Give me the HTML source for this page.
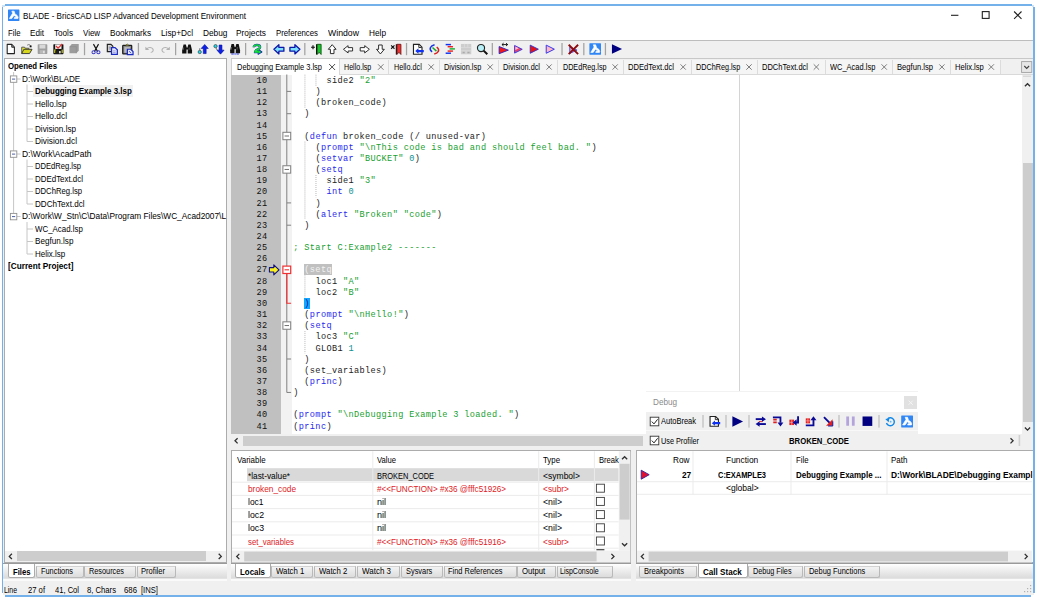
<!DOCTYPE html><html><head><meta charset="utf-8"><title>BLADE</title><style>
html,body{margin:0;padding:0;background:#fff;}
body{width:1040px;height:600px;position:relative;overflow:hidden;font-family:"Liberation Sans",sans-serif;}
#win{position:absolute;left:2.6px;top:5px;width:1031px;height:590.4px;background:#f0f0f0;overflow:hidden;}
#app{position:absolute;left:0;top:0;width:1040px;height:600px;}
.abs,.t,.c,#app div,#app svg,#app i{position:absolute;}
.t{white-space:pre;line-height:12px;color:#000;font-family:"Liberation Sans",sans-serif;transform-origin:0 50%;}
.c{white-space:pre;font:8.6px "Liberation Mono",monospace;line-height:11.15px;height:11.15px;color:#242424;letter-spacing:0.359px;}
.c.ln{color:#111;}
.c.k{color:#2828f0;}
.c.s{color:#18a030;}
.c.n{color:#109090;}
.c.cm{color:#18a030;}
.c.h{color:#f2f2f2;}
.c.hb{color:#0010a0;}
.pan{background:#fff;border:1px solid #acacac;box-sizing:border-box;}
.sep{width:1.3px;background:#a6a6a6;}
.thumb{background:#cdcdcd;}
.hl{height:1px;background:#e4e4e4;}
.vl{width:1px;background:#e4e4e4;}
.tb{box-sizing:border-box;border:1px solid #b9b9b9;border-top:1px solid #d2d2d2;border-radius:0 0 2.5px 2.5px;background:linear-gradient(#f3f3f3,#dcdcdc);}
.tb.a{background:#fff;border-color:#ababab;border-top:none;}
.ck{box-sizing:border-box;border:1px solid #404040;background:#fff;}
</style></head><body>
<div id="win"></div><div id="app">
<div style="left:3.3px;top:5.3px;width:1029.90px;height:34.70px;background:#fff"></div>
<div style="left:3.3px;top:40px;width:1029.90px;height:1.20px;background:#bdbdbd"></div>
<svg style="left:0;top:0" width="1040" height="30" viewBox="0 0 1040 30"><g transform="translate(8 9.5) scale(0.7125)"><rect x="0" y="0" width="16" height="16" rx="0.6" fill="#3186f6"/><path d="M5.4 2.3h3.2l1.5 4.6c2.2.2 3.600000000000001 2 4.2 4.4l-.4 1.4H8.700000000000001l.6-1.7h2.2c-.4-1.2-1.2-1.9-2.300000000000001-1.9L8.6 8 5.2 12.7H1.9l4.6-7.4z" fill="#fff" stroke="#fff" stroke-width="0.9" stroke-linejoin="round"/></g></svg>
<svg style="left:0;top:0" width="1040" height="60" viewBox="0 0 1040 60"><path d="M951 15.3h7.4" stroke="#222" stroke-width="1.1" fill="none"/><rect x="982.3" y="11.6" width="6.8" height="6.8" stroke="#222" stroke-width="1.1" fill="none"/><path d="M1014.1 11.5l7.4 7.4M1021.5 11.5l-7.4 7.4" stroke="#222" stroke-width="1.1" fill="none"/></svg>
<svg style="left:0;top:40px" width="1040" height="20" viewBox="0 40 1040 20"><g transform="translate(6.0 43.6) scale(0.6 0.675)"><path d="M2 1.2h7.6l4.4 4.2v9.4h-12z" fill="#fff" stroke="#222" stroke-width="1.8" stroke-linejoin="round"/><path d="M9.6 1.6v3.8h4" fill="#999" stroke="#222" stroke-width="1.4" stroke-linejoin="round"/></g><g transform="translate(21 43.6) scale(0.7125 0.7125)"><path d="M1 14V5h4l1 1.500000000000001h5V8" fill="#e6e63c" stroke="#444" stroke-width="1.2"/><path d="M1 14l3-6h11.5l-3.5 6z" fill="#d6d61e" stroke="#333" stroke-width="1.3" stroke-linejoin="round"/><path d="M8.5 2.5c1.5-1.5 3.5-1.5 5 .3" fill="none" stroke="#555" stroke-width="1"/><rect x="12.2" y="2.6" width="2.6" height="2.6" fill="#111"/></g><g transform="translate(37 43.6) scale(0.6875 0.6875)"><rect x="1" y="1" width="14" height="14" rx="1" fill="#9e9e9e"/><rect x="3.6" y="1.6" width="8.6" height="5.6" fill="#d8d8d8"/><rect x="4" y="9.6" width="8" height="5" fill="#b8b8b8"/><rect x="9" y="10.5" width="2" height="3.4" fill="#e8e8e8"/></g><g transform="translate(52.8 43.6) scale(0.7 0.7)"><rect x="0.8" y="0.8" width="14.4" height="14.4" rx="1" fill="#111"/><rect x="3.4" y="1.2" width="9" height="6.4" fill="#f4f4f4"/><path d="M4.5 3.5l3 3 6-6" stroke="#e03030" stroke-width="1.8" fill="none"/><rect x="2" y="8.4" width="2.2" height="5" fill="#d8d820"/><rect x="3.6" y="9.6" width="8.8" height="5.2" fill="#202020"/><rect x="9" y="10.6" width="2.2" height="3.2" fill="#eee"/><rect x="12.6" y="8.5" width="1.6" height="5" fill="#d8d820"/></g><g transform="translate(68.6 43.0) scale(0.7 0.7)"><path d="M4.5 1.500000000000001h10v9.5l-3.5 3.8h-9.8V5.2z" fill="#9c9c9c"/><path d="M1.500000000000001 5.2h9.5v9.5" fill="none" stroke="#8a8a8a" stroke-width="0.8"/></g><rect x="83.9" y="43" width="1.25" height="12.2" fill="#a2a2a2"/><g transform="translate(91.4 43.6) scale(0.575 0.6875)"><path d="M3.6 0.6l7.2 11M12.4 0.6l-7.2 11" stroke="#111" stroke-width="2" fill="none"/><ellipse cx="3.8" cy="12.6" rx="2.8" ry="2.2" fill="none" stroke="#3a3ac8" stroke-width="1.7"/><ellipse cx="12.2" cy="12.6" rx="2.8" ry="2.2" fill="none" stroke="#3a3ac8" stroke-width="1.7"/></g><g transform="translate(106.6 43.6) scale(0.725 0.725)"><path d="M1 1h5l2.6 2.6v7.4h-7.6z" fill="#d4d4d4" stroke="#222" stroke-width="1.6"/><path d="M3 5h3M3 7.4h3" stroke="#666" stroke-width="0.9"/><path d="M6.8 5.4h4.8l3.2 3.2v6.4h-8z" fill="#e6e8ff" stroke="#1c2cc0" stroke-width="1.7"/><path d="M8.6 10h4M8.6 12.2h4" stroke="#8088c8" stroke-width="0.9"/></g><g transform="translate(122 43.6) scale(0.725 0.725)"><rect x="1" y="2.4" width="12.4" height="11.8" rx="0.8" fill="#8a8a8a" stroke="#1c1c1c" stroke-width="1.7"/><rect x="3.2" y="4.6" width="8" height="8" fill="#b8b8b8"/><path d="M4.6 2.8L7.2 0.6l2.6 2.2z" fill="#e0d840" stroke="#222" stroke-width="0.8"/><path d="M7.4 7.8h4.6l3.2 3v4.4h-7.8z" fill="#e6e8ff" stroke="#1c2cc0" stroke-width="1.7"/><path d="M9.6 10.4l3.2 3" stroke="#1c2cc0" stroke-width="1"/></g><rect x="137.8" y="43" width="1.25" height="12.2" fill="#a2a2a2"/><g transform="translate(144.6 45.2) scale(0.6375 0.5125)"><path d="M3 7.5c3-4 8-4 10 0 1.500000000000001 3-.5 6-3.5 6.5" fill="none" stroke="#b0b0b0" stroke-width="1.7"/><path d="M1.2 3.2v6.2h6.2z" fill="#b0b0b0"/></g><g transform="translate(160.4 45.2) scale(0.6375 0.5125)"><path d="M13 7.5c-3-4-8-4-10 0-1.500000000000001 3 .5 6 3.5 6.5" fill="none" stroke="#b0b0b0" stroke-width="1.7"/><path d="M14.8 3.2v6.2h-6.2z" fill="#b0b0b0"/></g><rect x="175.0" y="43" width="1.25" height="12.2" fill="#a2a2a2"/><g transform="translate(181.6 43.6) scale(0.6875 0.6875)"><path d="M2.8 1.2h3.4l.9 3.4v9.9H0.8v-4.3z" fill="#111"/><path d="M13.2 1.2H9.8l-.9 3.4v9.9h6.3v-4.3z" fill="#111"/><rect x="6.4" y="5.6" width="3.2" height="3" fill="#111"/><path d="M3 5.5l-.8 4" stroke="#888" stroke-width="0.8"/><path d="M11.2 5.5l-.4 4" stroke="#888" stroke-width="0.8"/></g><g transform="translate(197.6 43.6) scale(0.7125 0.7125)"><path d="M10 1.2l5 5.600000000000001h-3v7.2h-4v-7.2h-3z" fill="#0c20e8" stroke="#000c90" stroke-width="0.8"/><circle cx="3" cy="11.8" r="2.3" fill="#20d8e8" stroke="#333" stroke-width="0.9"/><path d="M3 9V6.5" stroke="#333" stroke-width="0.9"/></g><g transform="translate(213.4 43.6) scale(0.7125 0.7125)"><path d="M10 14.8l5-5.600000000000001h-3v-7.2h-4v7.2h-3z" fill="#0c20e8" stroke="#000c90" stroke-width="0.8"/><circle cx="3" cy="3.6" r="2.3" fill="#20d8e8" stroke="#333" stroke-width="0.9"/><path d="M3.6 6l1.500000000000001 3" stroke="#333" stroke-width="0.9"/></g><g transform="translate(229.6 43.2) scale(0.6875 0.6875)"><path d="M2.8 1.2h3.4l.9 3.4v9.9H0.8v-4.3z" fill="#111"/><path d="M13.2 1.2H9.8l-.9 3.4v9.9h6.3v-4.3z" fill="#111"/><rect x="6.4" y="5.6" width="3.2" height="3" fill="#111"/><path d="M3 5.5l-.8 4" stroke="#888" stroke-width="0.8"/><path d="M11.2 5.5l-.4 4" stroke="#888" stroke-width="0.8"/><path d="M2.500000000000001 15.6h3.5M7 15.6h2M10 15.6h3.5" stroke="#2030e0" stroke-width="1.600000000000001"/></g><rect x="245.0" y="43" width="1.25" height="12.2" fill="#a2a2a2"/><g transform="translate(251.8 43.6) scale(0.6625 0.6625)"><path d="M3 5.5C3 1 12.5 1 12.5 5.5C12.5 9 5 8.5 5 12.6H10.5" fill="none" stroke="#2430c0" stroke-width="3.7"/><path d="M9.6 8.6l5.600000000000001 4-5.600000000000001 3.6z" fill="#1830b0" stroke="#1830b0" stroke-width="1.600000000000001" stroke-linejoin="round"/><path d="M3 5.5C3 1 12.5 1 12.5 5.5C12.5 9 5 8.5 5 12.6H10.5" fill="none" stroke="#10e030" stroke-width="2.5"/><path d="M10 9.6l4.2 3-4.2 2.8z" fill="#10e030"/></g><rect x="266.4" y="43" width="1.25" height="12.2" fill="#a2a2a2"/><g transform="translate(273.2 43.6) scale(0.7125 0.7125)"><path d="M1 8l7-6.5v3.8h7v5.4h-7v3.8z" fill="#7ce0ff" stroke="#0c16a8" stroke-width="1.8" stroke-linejoin="round"/></g><g transform="translate(289.2 43.6) scale(0.7125 0.7125)"><path d="M15 8l-7-6.5v3.8h-7v5.4h7v3.8z" fill="#7ce0ff" stroke="#0c16a8" stroke-width="1.8" stroke-linejoin="round"/></g><rect x="304.2" y="43" width="1.25" height="12.2" fill="#a2a2a2"/><g transform="translate(310.6 43.6) scale(0.725 0.725)"><path d="M9 1h5.5v14l-2.7-3-2.8 3z" fill="#18c82c" stroke="#0a500a" stroke-width="1.2"/><path d="M0.6 5h5.4M3.3 2.300000000000001v5.4" stroke="#111" stroke-width="1.6"/><path d="M8.2 1v14" stroke="#111" stroke-width="1.5"/></g><g transform="translate(327.4 44.0) scale(0.6 0.6625)"><path d="M8 1l6.5 7h-3.5v6.5h-6v-6.5h-3.5z" fill="#fff" stroke="#222" stroke-width="1.5" stroke-linejoin="round"/></g><g transform="translate(342.8 44.800000000000004) scale(0.6625 0.5625)"><path d="M1 8l7-6.5v3.5h6.8v6h-6.8v3.5z" fill="#fff" stroke="#222" stroke-width="1.5" stroke-linejoin="round"/></g><g transform="translate(359.4 44.800000000000004) scale(0.6625 0.5625)"><path d="M15 8l-7-6.5v3.5h-6.8v6h6.8v3.5z" fill="#fff" stroke="#222" stroke-width="1.5" stroke-linejoin="round"/></g><g transform="translate(375.6 44.0) scale(0.6 0.6625)"><path d="M8 15l6.5-7h-3.5v-6.5h-6v6.5h-3.5z" fill="#fff" stroke="#222" stroke-width="1.5" stroke-linejoin="round"/></g><g transform="translate(390.4 43.6) scale(0.725 0.725)"><path d="M9 1h5.5v14l-2.7-3-2.8 3z" fill="#f03030" stroke="#701010" stroke-width="1.2"/><path d="M1 2.500000000000001l4.6 4.600000000000001M5.6 2.500000000000001l-4.6 4.600000000000001" stroke="#111" stroke-width="1.500000000000001"/><path d="M8.2 1v14" stroke="#111" stroke-width="1.5"/></g><rect x="405.9" y="43" width="1.25" height="12.2" fill="#a2a2a2"/><g transform="translate(412.4 43.6) scale(0.7125 0.7125)"><path d="M1.500000000000001 1h8l4 4v10h-12z" fill="#fff" stroke="#222" stroke-width="1.6"/><path d="M9 1.500000000000001v4h4" fill="none" stroke="#222" stroke-width="1.3"/><path d="M4 10.5l4.5-3.8v2.300000000000001h7.5v3h-7.5v2.300000000000001z" fill="#1030f0"/></g><g transform="translate(428.6 43.6) scale(0.725 0.725)"><path d="M8.2 1.6C3 3 -.5 7 4.800000000000001 11.4" fill="none" stroke="#1834e0" stroke-width="2"/><path d="M5.4 5.4l5.4 5" stroke="#18a830" stroke-width="2"/><path d="M7.8 14.4C13 13 16.5 9 11.2 4.6" fill="none" stroke="#d82020" stroke-width="2"/></g><g transform="translate(445 43.6) scale(0.6625 0.6625)"><path d="M1 1.500000000000001h8" stroke="#1030f0" stroke-width="2.2"/><path d="M4 4.7h8" stroke="#f02020" stroke-width="2.2"/><path d="M7 8h8" stroke="#18b030" stroke-width="2.2"/><path d="M4 11.3h8" stroke="#f02020" stroke-width="2.2"/><path d="M1 14.5h8" stroke="#1030f0" stroke-width="2.2"/></g><g transform="translate(460.6 43.6) scale(0.6875 0.6875)"><rect x="0.5" y="0.5" width="15" height="15" fill="#cdcdcd"/><path d="M0.5 5.5h15M0.5 10.5h15M5.5 0.5v5M10.5 0.5v5M8 10.5v5" stroke="#dedede" stroke-width="1.1"/><rect x="3" y="12" width="3" height="2" fill="#aaa"/><rect x="10" y="12" width="3" height="2" fill="#aaa"/></g><g transform="translate(476.6 43.6) scale(0.7125 0.7125)"><path d="M9.5 9.5l5.5 5.5" stroke="#111" stroke-width="2.8"/><circle cx="6.2" cy="6.2" r="5" fill="#b8f0f8" stroke="#222" stroke-width="1.6"/></g><rect x="491.7" y="43" width="1.25" height="12.2" fill="#a2a2a2"/><g transform="translate(498.4 43.0) scale(0.7125 0.7125)"><path d="M1 5l13 5-13 5z" fill="#f01818" stroke="#2020c0" stroke-width="1.2" stroke-linejoin="round"/><path d="M5 2.2h8M5 2.2l2.300000000000001-2M5 2.2l2.300000000000001 2M13 2.2l-2.300000000000001-2M13 2.2l-2.300000000000001 2" stroke="#111" stroke-width="1.3" fill="none"/></g><g transform="translate(514 44.6) scale(0.5875 0.5875)"><path d="M1 1.500000000000001l13 6.5-13 6.5z" fill="#f04060" stroke="#3030e0" stroke-width="1.5" stroke-linejoin="round"/><path d="M2.2 3.2l6 3-6 3z" fill="#ffc0d0"/></g><g transform="translate(529.6 44.2) scale(0.625 0.625)"><path d="M1 1.500000000000001l13 6.5-13 6.5z" fill="#e81010" stroke="#2828c8" stroke-width="1.4" stroke-linejoin="round"/></g><g transform="translate(545.6 44.2) scale(0.625 0.625)"><path d="M1 1.500000000000001l13 6.5-13 6.5z" fill="#ffb8c0" stroke="#3838f0" stroke-width="1.6" stroke-linejoin="round"/></g><rect x="561.4" y="43" width="1.25" height="12.2" fill="#a2a2a2"/><g transform="translate(567.6 43.6) scale(0.725 0.725)"><path d="M3 4.5l10 4.5-10 4.5z" fill="#f0a0b8" stroke="#4848e0" stroke-width="1.3" stroke-linejoin="round"/><path d="M1.5 1.6l13 13M14.5 1.6l-13 13" stroke="#8a0c10" stroke-width="2.5"/></g><rect x="583.1999999999999" y="43" width="1.25" height="12.2" fill="#a2a2a2"/><g transform="translate(589.4 43.2) scale(0.725)"><rect x="0" y="0" width="16" height="16" rx="0.6" fill="#3186f6"/><path d="M5.4 2.3h3.2l1.5 4.6c2.2.2 3.600000000000001 2 4.2 4.4l-.4 1.4H8.700000000000001l.6-1.7h2.2c-.4-1.2-1.2-1.9-2.300000000000001-1.9L8.6 8 5.2 12.7H1.9l4.6-7.4z" fill="#fff" stroke="#fff" stroke-width="0.9" stroke-linejoin="round"/></g><rect x="604.8" y="43" width="1.25" height="12.2" fill="#a2a2a2"/><g transform="translate(611.6 43.6) scale(0.675 0.675)"><path d="M0.5 0.8l15 7.2-15 7.2z" fill="#000080"/></g></svg>
<div class="pan" style="left:4.2px;top:58px;width:223.10px;height:505.40px;"></div>
<div style="left:33px;top:85px;width:100.30px;height:12.30px;background:#f1f1f1"></div>
<svg style="left:0;top:58px" width="230" height="300" viewBox="0 58 230 300"><path d="M13.6 72.0V216.0" stroke="#c6c6c6" stroke-width="1" fill="none"/><path d="M17 79.0h3.5" stroke="#c6c6c6" stroke-width="1" fill="none"/><path d="M27 84.5V141.5" stroke="#c6c6c6" stroke-width="1" fill="none"/><path d="M27 91.5h6" stroke="#c6c6c6" stroke-width="1" fill="none"/><path d="M27 104.0h6" stroke="#c6c6c6" stroke-width="1" fill="none"/><path d="M27 116.5h6" stroke="#c6c6c6" stroke-width="1" fill="none"/><path d="M27 129.0h6" stroke="#c6c6c6" stroke-width="1" fill="none"/><path d="M27 141.5h6" stroke="#c6c6c6" stroke-width="1" fill="none"/><rect x="10.4" y="75.9" width="6.4" height="6.4" fill="#fff" stroke="#919191" stroke-width="0.9"/><path d="M12 79.1h3.2" stroke="#4a5ea0" stroke-width="1"/><path d="M17 154.0h3.5" stroke="#c6c6c6" stroke-width="1" fill="none"/><path d="M27 159.5V204.0" stroke="#c6c6c6" stroke-width="1" fill="none"/><path d="M27 166.5h6" stroke="#c6c6c6" stroke-width="1" fill="none"/><path d="M27 179.0h6" stroke="#c6c6c6" stroke-width="1" fill="none"/><path d="M27 191.5h6" stroke="#c6c6c6" stroke-width="1" fill="none"/><path d="M27 204.0h6" stroke="#c6c6c6" stroke-width="1" fill="none"/><rect x="10.4" y="150.9" width="6.4" height="6.4" fill="#fff" stroke="#919191" stroke-width="0.9"/><path d="M12 154.1h3.2" stroke="#4a5ea0" stroke-width="1"/><path d="M17 216.5h3.5" stroke="#c6c6c6" stroke-width="1" fill="none"/><path d="M27 222.0V254.0" stroke="#c6c6c6" stroke-width="1" fill="none"/><path d="M27 229.0h6" stroke="#c6c6c6" stroke-width="1" fill="none"/><path d="M27 241.5h6" stroke="#c6c6c6" stroke-width="1" fill="none"/><path d="M27 254.0h6" stroke="#c6c6c6" stroke-width="1" fill="none"/><rect x="10.4" y="213.4" width="6.4" height="6.4" fill="#fff" stroke="#919191" stroke-width="0.9"/><path d="M12 216.6h3.2" stroke="#4a5ea0" stroke-width="1"/></svg>
<div style="left:5.2px;top:550.6px;width:221.10px;height:11.80px;background:#f0f0f0"></div>
<div class="thumb" style="left:17px;top:551.4px;width:189.00px;height:10.00px;"></div>
<div style="left:231px;top:58px;width:801.60px;height:16.40px;background:#f0f0f0"></div>
<div style="left:231px;top:57.6px;width:801.60px;height:1.00px;background:#c8c8c8"></div>
<div style="left:340px;top:59.5px;width:660.50px;height:14.10px;background:#f5f5f5"></div>
<div style="left:231.4px;top:58.6px;width:108.60px;height:16.00px;background:#fff;border-left:1px solid #d0d0d0;border-right:1px solid #d8d8d8;box-sizing:border-box"></div>
<div style="left:388.25px;top:60px;width:1.10px;height:13.50px;background:#dcdcdc"></div>
<div style="left:438.5px;top:60px;width:1.10px;height:13.50px;background:#dcdcdc"></div>
<div style="left:498.25px;top:60px;width:1.10px;height:13.50px;background:#dcdcdc"></div>
<div style="left:557.0px;top:60px;width:1.10px;height:13.50px;background:#dcdcdc"></div>
<div style="left:622.5px;top:60px;width:1.10px;height:13.50px;background:#dcdcdc"></div>
<div style="left:690.5px;top:60px;width:1.10px;height:13.50px;background:#dcdcdc"></div>
<div style="left:756.5px;top:60px;width:1.10px;height:13.50px;background:#dcdcdc"></div>
<div style="left:825.3px;top:60px;width:1.10px;height:13.50px;background:#dcdcdc"></div>
<div style="left:891.8px;top:60px;width:1.10px;height:13.50px;background:#dcdcdc"></div>
<div style="left:950.0px;top:60px;width:1.10px;height:13.50px;background:#dcdcdc"></div>
<div style="left:1000.0px;top:60px;width:1.10px;height:13.50px;background:#dcdcdc"></div>
<div style="left:340px;top:73.6px;width:692.60px;height:0.90px;background:#d9d9d9"></div>
<svg style="left:0;top:50px" width="1040" height="40" viewBox="0 50 1040 40"><path d="M329.1 64.0L335.1 70.0M335.1 64.0L329.1 70.0" stroke="#444" stroke-width="0.95" fill="none"/><path d="M378.0 64.25L383.5 69.75M383.5 64.25L378.0 69.75" stroke="#777" stroke-width="0.95" fill="none"/><path d="M428.5 64.35L433.8 69.65M433.8 64.35L428.5 69.65" stroke="#777" stroke-width="0.95" fill="none"/><path d="M487.5 64.35L492.8 69.65M492.8 64.35L487.5 69.65" stroke="#777" stroke-width="0.95" fill="none"/><path d="M546.5 64.39999999999998L551.7 69.60000000000002M551.7 64.39999999999998L546.5 69.60000000000002" stroke="#777" stroke-width="0.95" fill="none"/><path d="M612.5 64.35000000000002L617.8 69.64999999999998M617.8 64.35000000000002L612.5 69.64999999999998" stroke="#777" stroke-width="0.95" fill="none"/><path d="M680.5 64.35000000000002L685.8 69.64999999999998M685.8 64.35000000000002L680.5 69.64999999999998" stroke="#777" stroke-width="0.95" fill="none"/><path d="M746.3 64.29999999999995L751.7 69.70000000000005M751.7 64.29999999999995L746.3 69.70000000000005" stroke="#777" stroke-width="0.95" fill="none"/><path d="M813.7 64.30000000000001L819.1 69.69999999999999M819.1 64.30000000000001L813.7 69.69999999999999" stroke="#777" stroke-width="0.95" fill="none"/><path d="M881.5 64.30000000000001L886.9 69.69999999999999M886.9 64.30000000000001L881.5 69.69999999999999" stroke="#777" stroke-width="0.95" fill="none"/><path d="M939.3 64.39999999999998L944.5 69.60000000000002M944.5 64.39999999999998L939.3 69.60000000000002" stroke="#777" stroke-width="0.95" fill="none"/><path d="M988.5 64.25L994.0 69.75M994.0 64.25L988.5 69.75" stroke="#777" stroke-width="0.95" fill="none"/><rect x="1021.6" y="61.6" width="10.2" height="10.8" fill="#e6e6e6" stroke="#a0a0a0" stroke-width="0.9"/><polyline points="1024.30,66.00 1026.70,68.40 1029.10,66.00" fill="none" stroke="#404040" stroke-width="1.1"/></svg>
<div style="left:231px;top:74.5px;width:791.30px;height:359.50px;background:#fff"></div>
<div style="left:231px;top:74.5px;width:50.00px;height:359.50px;background:#c0c0c0"></div>
<div style="left:281px;top:74.5px;width:11.00px;height:359.50px;background:#f2f2f2"></div>
<div style="left:738.7px;top:74.5px;width:1.10px;height:359.50px;background:#d4d4d4"></div>
<div style="left:1022.3px;top:74.5px;width:10.30px;height:359.50px;background:#f0f0f0"></div>
<div class="thumb" style="left:1022.6px;top:163.3px;width:10.00px;height:258.70px;"></div>
<div style="left:231px;top:434px;width:801.60px;height:14.00px;background:#f0f0f0"></div>
<div class="thumb" style="left:242.5px;top:436px;width:400.50px;height:9.70px;"></div>
<svg style="left:225px;top:70px" width="815" height="385" viewBox="225 70 815 385"><path d="M286.8 74.5V392.45h4.3" stroke="#808080" stroke-width="1" fill="none"/><path d="M286.8 91.4h4.3" stroke="#808080" stroke-width="1" fill="none"/><path d="M286.8 113.7h4.3" stroke="#808080" stroke-width="1" fill="none"/><path d="M286.8 202.9h4.3" stroke="#808080" stroke-width="1" fill="none"/><path d="M286.8 225.20000000000002h4.3" stroke="#808080" stroke-width="1" fill="none"/><path d="M286.8 359.0h4.3" stroke="#808080" stroke-width="1" fill="none"/><path d="M286.8 269.8V303.25h4.3" stroke="#f03030" stroke-width="1.2" fill="none"/><rect x="282.90000000000003" y="132.3" width="7.8" height="7.4" fill="#fff" stroke="#808080" stroke-width="1"/><path d="M284.6 136.0h4.4" stroke="#707070" stroke-width="1"/><rect x="282.90000000000003" y="165.75" width="7.8" height="7.4" fill="#fff" stroke="#808080" stroke-width="1"/><path d="M284.6 169.45h4.4" stroke="#707070" stroke-width="1"/><rect x="282.90000000000003" y="321.85" width="7.8" height="7.4" fill="#fff" stroke="#808080" stroke-width="1"/><path d="M284.6 325.55h4.4" stroke="#707070" stroke-width="1"/><rect x="282.90000000000003" y="266.1" width="7.8" height="7.4" fill="#fff" stroke="#f03030" stroke-width="1.2"/><path d="M284.6 269.8h4.4" stroke="#f03030" stroke-width="1.1"/><path d="M269.4 267.6h4.4v-2.8l5.2 5-5.2 5v-2.8h-4.4z" fill="#f8f020" stroke="#101080" stroke-width="1.1" stroke-linejoin="round"/><path d="M304.94 74.67V108.12" stroke="#b8b8b8" stroke-width="1" stroke-dasharray="1 1" fill="none"/><path d="M315.98 74.67V85.83" stroke="#b8b8b8" stroke-width="1" stroke-dasharray="1 1" fill="none"/><path d="M304.94 141.58V219.62" stroke="#b8b8b8" stroke-width="1" stroke-dasharray="1 1" fill="none"/><path d="M315.98 175.03V197.32" stroke="#b8b8b8" stroke-width="1" stroke-dasharray="1 1" fill="none"/><path d="M304.94 275.38V297.68" stroke="#b8b8b8" stroke-width="1" stroke-dasharray="1 1" fill="none"/><path d="M304.94 331.12V353.43" stroke="#b8b8b8" stroke-width="1" stroke-dasharray="1 1" fill="none"/><polyline points="1024.90,86.30 1027.50,83.70 1030.10,86.30" fill="none" stroke="#303030" stroke-width="1.3"/><polyline points="1024.90,427.50 1027.50,430.10 1030.10,427.50" fill="none" stroke="#303030" stroke-width="1.3"/><polyline points="237.60,438.20 235.00,440.80 237.60,443.40" fill="none" stroke="#303030" stroke-width="1.3"/><polyline points="1010.50,438.20 1013.10,440.80 1010.50,443.40" fill="none" stroke="#303030" stroke-width="1.3"/><rect x="1018.6" y="435" width="1.6" height="11" fill="#d0d0d0"/><rect x="1023" y="75.6" width="8" height="1.4" fill="#d8d8d8"/></svg>
<div style="left:303.74px;top:264.125px;width:28.30px;height:10.85px;background:#c0c0c0"></div>
<div style="left:303.74px;top:297.675px;width:5.92px;height:10.95px;background:#12a6ff"></div>
<span class="c ln" style="left:256.56px;top:75.92px">10</span>
<span class="c" style="left:326.42px;top:75.92px">side2 </span>
<span class="c s" style="left:359.54px;top:75.92px">&quot;2&quot;</span>
<span class="c ln" style="left:256.56px;top:87.08px">11</span>
<span class="c" style="left:315.38px;top:87.08px">)</span>
<span class="c ln" style="left:256.56px;top:98.22px">12</span>
<span class="c" style="left:315.38px;top:98.22px">(broken_code)</span>
<span class="c ln" style="left:256.56px;top:109.38px">13</span>
<span class="c" style="left:304.34px;top:109.38px">)</span>
<span class="c ln" style="left:256.56px;top:120.52px">14</span>
<span class="c ln" style="left:256.56px;top:131.68px">15</span>
<span class="c" style="left:304.34px;top:131.68px">(</span>
<span class="c k" style="left:309.86px;top:131.68px">defun</span>
<span class="c" style="left:337.46px;top:131.68px"> broken_code (/ unused-var)</span>
<span class="c ln" style="left:256.56px;top:142.83px">16</span>
<span class="c" style="left:315.38px;top:142.83px">(</span>
<span class="c k" style="left:320.90px;top:142.83px">prompt</span>
<span class="c s" style="left:359.54px;top:142.83px">&quot;\nThis code is bad and should feel bad. &quot;</span>
<span class="c" style="left:591.38px;top:142.83px">)</span>
<span class="c ln" style="left:256.56px;top:153.98px">17</span>
<span class="c" style="left:315.38px;top:153.98px">(</span>
<span class="c k" style="left:320.90px;top:153.98px">setvar</span>
<span class="c s" style="left:359.54px;top:153.98px">&quot;BUCKET&quot;</span>
<span class="c n" style="left:409.22px;top:153.98px">0</span>
<span class="c" style="left:414.74px;top:153.98px">)</span>
<span class="c ln" style="left:256.56px;top:165.12px">18</span>
<span class="c" style="left:315.38px;top:165.12px">(</span>
<span class="c k" style="left:320.90px;top:165.12px">setq</span>
<span class="c ln" style="left:256.56px;top:176.28px">19</span>
<span class="c" style="left:326.42px;top:176.28px">side1 </span>
<span class="c s" style="left:359.54px;top:176.28px">&quot;3&quot;</span>
<span class="c ln" style="left:256.56px;top:187.43px">20</span>
<span class="c k" style="left:326.42px;top:187.43px">int</span>
<span class="c n" style="left:348.50px;top:187.43px">0</span>
<span class="c ln" style="left:256.56px;top:198.58px">21</span>
<span class="c" style="left:315.38px;top:198.58px">)</span>
<span class="c ln" style="left:256.56px;top:209.73px">22</span>
<span class="c" style="left:315.38px;top:209.73px">(</span>
<span class="c k" style="left:320.90px;top:209.73px">alert</span>
<span class="c s" style="left:354.02px;top:209.73px">&quot;Broken&quot; &quot;code&quot;</span>
<span class="c" style="left:436.82px;top:209.73px">)</span>
<span class="c ln" style="left:256.56px;top:220.88px">23</span>
<span class="c" style="left:304.34px;top:220.88px">)</span>
<span class="c ln" style="left:256.56px;top:232.03px">24</span>
<span class="c ln" style="left:256.56px;top:243.18px">25</span>
<span class="c cm" style="left:293.30px;top:243.18px">; Start C:Example2 -------</span>
<span class="c ln" style="left:256.56px;top:254.32px">26</span>
<span class="c ln" style="left:256.56px;top:265.48px">27</span>
<span class="c h" style="left:304.34px;top:265.48px">(setq</span>
<span class="c ln" style="left:256.56px;top:276.63px">28</span>
<span class="c" style="left:315.38px;top:276.63px">loc1 </span>
<span class="c s" style="left:342.98px;top:276.63px">&quot;A&quot;</span>
<span class="c ln" style="left:256.56px;top:287.78px">29</span>
<span class="c" style="left:315.38px;top:287.78px">loc2 </span>
<span class="c s" style="left:342.98px;top:287.78px">&quot;B&quot;</span>
<span class="c ln" style="left:256.56px;top:298.93px">30</span>
<span class="c hb" style="left:304.34px;top:298.93px">)</span>
<span class="c ln" style="left:256.56px;top:310.07px">31</span>
<span class="c" style="left:304.34px;top:310.07px">(</span>
<span class="c k" style="left:309.86px;top:310.07px">prompt</span>
<span class="c s" style="left:348.50px;top:310.07px">&quot;\nHello!&quot;</span>
<span class="c" style="left:403.70px;top:310.07px">)</span>
<span class="c ln" style="left:256.56px;top:321.23px">32</span>
<span class="c" style="left:304.34px;top:321.23px">(</span>
<span class="c k" style="left:309.86px;top:321.23px">setq</span>
<span class="c ln" style="left:256.56px;top:332.38px">33</span>
<span class="c" style="left:315.38px;top:332.38px">loc3 </span>
<span class="c s" style="left:342.98px;top:332.38px">&quot;C&quot;</span>
<span class="c ln" style="left:256.56px;top:343.53px">34</span>
<span class="c" style="left:315.38px;top:343.53px">GLOB1 </span>
<span class="c n" style="left:348.50px;top:343.53px">1</span>
<span class="c ln" style="left:256.56px;top:354.68px">35</span>
<span class="c" style="left:304.34px;top:354.68px">)</span>
<span class="c ln" style="left:256.56px;top:365.83px">36</span>
<span class="c" style="left:304.34px;top:365.83px">(set_variables)</span>
<span class="c ln" style="left:256.56px;top:376.98px">37</span>
<span class="c" style="left:304.34px;top:376.98px">(</span>
<span class="c k" style="left:309.86px;top:376.98px">princ</span>
<span class="c" style="left:337.46px;top:376.98px">)</span>
<span class="c ln" style="left:256.56px;top:388.12px">38</span>
<span class="c" style="left:293.30px;top:388.12px">)</span>
<span class="c ln" style="left:256.56px;top:399.28px">39</span>
<span class="c ln" style="left:256.56px;top:410.43px">40</span>
<span class="c" style="left:293.30px;top:410.43px">(</span>
<span class="c k" style="left:298.82px;top:410.43px">prompt</span>
<span class="c s" style="left:337.46px;top:410.43px">&quot;\nDebugging Example 3 loaded. &quot;</span>
<span class="c" style="left:514.10px;top:410.43px">)</span>
<span class="c ln" style="left:256.56px;top:421.58px">41</span>
<span class="c" style="left:293.30px;top:421.58px">(</span>
<span class="c k" style="left:298.82px;top:421.58px">princ</span>
<span class="c" style="left:326.42px;top:421.58px">)</span>
<div class="pan" style="left:231px;top:450.3px;width:400.30px;height:113.10px;"></div>
<svg style="left:225px;top:448px" width="410" height="118" viewBox="225 448 410 118"><rect x="247" y="468.2" width="371.6" height="13" fill="#d9d9d9"/><rect x="232" y="481.70" width="386.6" height="1" fill="#ebebeb"/><rect x="232" y="494.90" width="386.6" height="1" fill="#ebebeb"/><rect x="232" y="508.10" width="386.6" height="1" fill="#ebebeb"/><rect x="232" y="521.30" width="386.6" height="1" fill="#ebebeb"/><rect x="232" y="534.50" width="386.6" height="1" fill="#ebebeb"/><rect x="232" y="547.70" width="386.6" height="1" fill="#ebebeb"/><rect x="372.3" y="451.3" width="1" height="99" fill="#ebebeb"/><rect x="538.2" y="451.3" width="1" height="99" fill="#ebebeb"/><rect x="593.9" y="451.3" width="1" height="99" fill="#ebebeb"/><rect x="596.4" y="484.20" width="8" height="8" fill="#fff" stroke="#3c3c3c" stroke-width="0.9"/><rect x="596.4" y="497.40" width="8" height="8" fill="#fff" stroke="#3c3c3c" stroke-width="0.9"/><rect x="596.4" y="510.60" width="8" height="8" fill="#fff" stroke="#3c3c3c" stroke-width="0.9"/><rect x="596.4" y="523.80" width="8" height="8" fill="#fff" stroke="#3c3c3c" stroke-width="0.9"/><rect x="596.4" y="537.00" width="8" height="8" fill="#fff" stroke="#3c3c3c" stroke-width="0.9"/><rect x="596.4" y="549" width="8" height="1.500000000000001" fill="#555"/><rect x="618.8" y="451.3" width="11.5" height="99.3" fill="#f0f0f0"/><rect x="619.6" y="463.8" width="10" height="55.8" fill="#cdcdcd"/><polyline points="622.00,459.30 624.60,456.70 627.20,459.30" fill="none" stroke="#303030" stroke-width="1.3"/><polyline points="622.00,543.20 624.60,545.80 627.20,543.20" fill="none" stroke="#303030" stroke-width="1.3"/><rect x="232" y="550.6" width="398.3" height="11.8" fill="#f0f0f0"/><rect x="244.2" y="551.6" width="352.4" height="9.8" fill="#cdcdcd"/><polyline points="239.30,553.90 236.70,556.50 239.30,559.10" fill="none" stroke="#303030" stroke-width="1.3"/><polyline points="611.40,553.90 614.00,556.50 611.40,559.10" fill="none" stroke="#303030" stroke-width="1.3"/></svg><svg style="left:0;top:548px" width="230" height="16" viewBox="0 548 230 16"><polyline points="11.90,553.80 9.30,556.40 11.90,559.00" fill="none" stroke="#303030" stroke-width="1.3"/><polyline points="218.70,553.80 221.30,556.40 218.70,559.00" fill="none" stroke="#303030" stroke-width="1.3"/></svg>
<div class="pan" style="left:636px;top:450.3px;width:398.00px;height:113.10px;"></div>
<svg style="left:632px;top:448px" width="402" height="118" viewBox="632 448 402 118"><rect x="637" y="481.2" width="395" height="1" fill="#ebebeb"/><rect x="637" y="493.8" width="395" height="1" fill="#ebebeb"/><rect x="692.5" y="451.3" width="1" height="43" fill="#ebebeb"/><rect x="790.5" y="451.3" width="1" height="43" fill="#ebebeb"/><rect x="886.5" y="451.3" width="1" height="43" fill="#ebebeb"/><path d="M641.2 470.2l8 4.500000000000001-8 4.500000000000001z" fill="#e01030" stroke="#3020a0" stroke-width="0.9" stroke-linejoin="round"/><rect x="637" y="550.6" width="395" height="11.8" fill="#f0f0f0"/><rect x="648.6" y="551.6" width="359.4" height="9.8" fill="#cdcdcd"/><polyline points="643.90,553.90 641.30,556.50 643.90,559.10" fill="none" stroke="#303030" stroke-width="1.3"/><polyline points="1024.70,553.90 1027.30,556.50 1024.70,559.10" fill="none" stroke="#303030" stroke-width="1.3"/></svg>
<div style="left:3.3px;top:563.4px;width:1029.90px;height:1.00px;background:#9a9a9a"></div>
<div style="left:3.3px;top:564.4px;width:1029.90px;height:14.80px;background:linear-gradient(#ffffff,#f4f4f4 25%,#dcdcdc 92%,#e8e8e8)"></div>
<div style="left:3.3px;top:579.2px;width:1029.90px;height:1.40px;background:#fafafa"></div>
<div style="left:227.3px;top:563.4px;width:3.70px;height:17.20px;background:#f0f0f0"></div>
<div style="left:631.3px;top:563.4px;width:4.70px;height:17.20px;background:#f0f0f0"></div>
<div class="tb a" style="left:7.6px;top:564.2px;width:27.60px;height:13.80px;"></div><div class="tb" style="left:35.8px;top:566px;width:48.00px;height:11.50px;"></div><div class="tb" style="left:84.4px;top:566px;width:51.80px;height:11.50px;"></div><div class="tb" style="left:136.8px;top:566px;width:39.50px;height:11.50px;"></div>
<div class="tb a" style="left:235px;top:564.2px;width:35.80px;height:13.80px;"></div><div class="tb" style="left:271.4px;top:566px;width:41.60px;height:11.50px;"></div><div class="tb" style="left:313.6px;top:566px;width:42.60px;height:11.50px;"></div><div class="tb" style="left:356.8px;top:566px;width:43.40px;height:11.50px;"></div><div class="tb" style="left:400.8px;top:566px;width:42.40px;height:11.50px;"></div><div class="tb" style="left:443.8px;top:566px;width:72.80px;height:11.50px;"></div><div class="tb" style="left:517.2px;top:566px;width:39.00px;height:11.50px;"></div><div class="tb" style="left:556.8px;top:566px;width:56.00px;height:11.50px;"></div>
<div class="tb" style="left:638.8px;top:566px;width:58.40px;height:11.50px;"></div><div class="tb a" style="left:697.6px;top:564.2px;width:50.00px;height:13.80px;"></div><div class="tb" style="left:748px;top:566px;width:55.00px;height:11.50px;"></div><div class="tb" style="left:803.6px;top:566px;width:76.40px;height:11.50px;"></div>
<div style="left:645.6px;top:391px;width:272.40px;height:21.20px;background:#fff"></div><div style="left:645.6px;top:390.6px;width:272.40px;height:0.80px;background:#f2f2f2"></div><div style="left:904.3px;top:396.2px;width:12.90px;height:13.20px;background:#e1e1e1"></div><div style="left:645.6px;top:412.2px;width:272.40px;height:35.80px;background:#f0f0f0"></div><div style="left:645.6px;top:430.2px;width:272.40px;height:1.00px;background:#f8f8f8"></div><svg style="left:640px;top:390px" width="285" height="60" viewBox="640 390 285 60"><path d="M908.6 400.6l4.2 4.2M912.8 400.6l-4.2 4.2" stroke="#f4f4f4" stroke-width="1"/><rect x="650.2" y="417.2" width="8.6" height="8.6" fill="#fff" stroke="#333" stroke-width="0.9"/><path d="M651.8 421.59999999999997l2.2 2.300000000000001 3.6-4.6" stroke="#222" stroke-width="1" fill="none"/><rect x="650.2" y="436.2" width="8.6" height="8.6" fill="#fff" stroke="#333" stroke-width="0.9"/><path d="M651.8 440.59999999999997l2.2 2.300000000000001 3.6-4.6" stroke="#222" stroke-width="1" fill="none"/><rect x="702.4" y="415" width="1.2" height="12.600000000000001" fill="#bdbdbd"/><g transform="translate(709 415.8) scale(0.7 0.7)"><path d="M1.500000000000001 1h8l4 4v10h-12z" fill="#fff" stroke="#222" stroke-width="1.6"/><path d="M9 1.500000000000001v4h4" fill="none" stroke="#222" stroke-width="1.3"/><path d="M4 10.5l4.5-3.8v2.300000000000001h7.5v3h-7.5v2.300000000000001z" fill="#1030f0"/></g><rect x="725.4" y="415" width="1.2" height="12.600000000000001" fill="#bdbdbd"/><g transform="translate(732 415.8) scale(0.7125 0.7125)"><path d="M0.5 0.8l15 7.2-15 7.2z" fill="#000080"/></g><rect x="748.4" y="415" width="1.2" height="12.600000000000001" fill="#bdbdbd"/><g transform="translate(755 415.8) scale(0.725 0.725)"><path d="M1 4.6h10" stroke="#0a0a96" stroke-width="2.6"/><path d="M9.6 0.8l5.6 3.8-5.6 3.8z" fill="#0a0a96"/><path d="M15 11.4h-10" stroke="#0a0a96" stroke-width="2.6"/><path d="M6.4 7.6l-5.6 3.8 5.6 3.8z" fill="#0a0a96"/><path d="M5.5 8h4.5" stroke="#e02020" stroke-width="1.3"/></g><g transform="translate(772.2 415.8) scale(0.7 0.7)"><path d="M1.5 5h5M1.5 7.4h5M1.5 9.8h5" stroke="#e02020" stroke-width="1.7"/><path d="M1 2.2h10.8V10" stroke="#0a0a96" stroke-width="2.6" fill="none"/><path d="M7.6 9.4h8.4l-4.2 5.8z" fill="#0a0a96"/></g><g transform="translate(788.8 415.8) scale(0.7125 0.7125)"><rect x="0.8" y="5.4" width="6.6" height="7.6" fill="#e02020"/><path d="M0.8 9.2h6.6M4.1 5.4v7.6" stroke="#ffb0b0" stroke-width="0.9"/><path d="M13 0.8V9.4H10" stroke="#0a0a96" stroke-width="2.6" fill="none"/><path d="M11 5l-5.6 4.4 5.6 4.4z" fill="#0a0a96"/></g><g transform="translate(805.2 415.8) scale(0.7125 0.7125)"><rect x="0.8" y="3.6" width="6" height="7" fill="#e02020"/><path d="M0.8 7.1h6M3.8 3.6v7" stroke="#ffb0b0" stroke-width="0.9"/><path d="M0.8 13.4H11.6V5.6" stroke="#0a0a96" stroke-width="2.6" fill="none"/><path d="M7.4 6.4h8.4l-4.2-5.8z" fill="#0a0a96"/></g><g transform="translate(822.6 415.8) scale(0.6875 0.6875)"><path d="M2 2l9 9" stroke="#0a0a96" stroke-width="2.8"/><path d="M14.6 5v9.6H5z" fill="#e02020"/><path d="M14.8 8v6.8H8" stroke="#0a0a96" stroke-width="1.4" fill="none"/></g><rect x="838.4" y="415" width="1.2" height="12.600000000000001" fill="#bdbdbd"/><g transform="translate(845.6 415.8) scale(0.6625 0.6625)"><rect x="1" y="1" width="4.2" height="14" fill="#b4a4dc"/><rect x="9.5" y="1" width="4.2" height="14" fill="#b4a4dc"/></g><g transform="translate(862 415.8) scale(0.675 0.675)"><rect x="0.8" y="1" width="14.4" height="14" fill="#000080"/></g><rect x="878.4" y="415" width="1.2" height="12.600000000000001" fill="#bdbdbd"/><g transform="translate(884.8 415.8) scale(0.7125 0.7125)"><path d="M4 4.2a5.600000000000001 5.600000000000001 0 1 1-1.6 5.8" fill="none" stroke="#1088e8" stroke-width="2"/><path d="M0.6 4.6l5.800000000000001-1.2-1 5.600000000000001z" fill="#1088e8"/><circle cx="8.2" cy="8.2" r="1.3" fill="#60b8f0"/></g><g transform="translate(901.2 415.6) scale(0.7375)"><rect x="0" y="0" width="16" height="16" rx="0.6" fill="#3186f6"/><path d="M5.4 2.3h3.2l1.5 4.6c2.2.2 3.600000000000001 2 4.2 4.4l-.4 1.4H8.700000000000001l.6-1.7h2.2c-.4-1.2-1.2-1.9-2.300000000000001-1.9L8.6 8 5.2 12.7H1.9l4.6-7.4z" fill="#fff" stroke="#fff" stroke-width="0.9" stroke-linejoin="round"/></g></svg>
<svg style="left:1020px;top:583px" width="14" height="13" viewBox="0 0 14 13"><rect x="10" y="2" width="1.2" height="1.2" fill="#b0b0b0"/><rect x="10" y="5" width="1.2" height="1.2" fill="#b0b0b0"/><rect x="7" y="5" width="1.2" height="1.2" fill="#b0b0b0"/><rect x="10" y="8" width="1.2" height="1.2" fill="#b0b0b0"/><rect x="7" y="8" width="1.2" height="1.2" fill="#b0b0b0"/><rect x="4" y="8" width="1.2" height="1.2" fill="#b0b0b0"/></svg>
<span class="t" style="left:23.00px;top:9.73px;font-size:9.12px;transform:scaleX(0.8850);">BLADE - BricsCAD LISP Advanced Development Environment</span>
<span class="t" style="left:7.50px;top:26.74px;font-size:8.8px;transform:scaleX(0.8811);">File</span>
<span class="t" style="left:30.00px;top:26.74px;font-size:8.8px;transform:scaleX(0.9228);">Edit</span>
<span class="t" style="left:54.00px;top:26.74px;font-size:8.8px;transform:scaleX(0.9247);">Tools</span>
<span class="t" style="left:83.00px;top:26.74px;font-size:8.8px;transform:scaleX(0.8984);">View</span>
<span class="t" style="left:110.00px;top:26.74px;font-size:8.8px;transform:scaleX(0.9318);">Bookmarks</span>
<span class="t" style="left:161.00px;top:26.74px;font-size:8.8px;transform:scaleX(0.9416);">Lisp+Dcl</span>
<span class="t" style="left:202.50px;top:26.74px;font-size:8.8px;transform:scaleX(0.9446);">Debug</span>
<span class="t" style="left:236.00px;top:26.74px;font-size:8.8px;transform:scaleX(0.9440);">Projects</span>
<span class="t" style="left:276.00px;top:26.74px;font-size:8.8px;transform:scaleX(0.8854);">Preferences</span>
<span class="t" style="left:328.00px;top:26.74px;font-size:8.8px;transform:scaleX(0.9905);">Window</span>
<span class="t" style="left:369.00px;top:26.74px;font-size:8.8px;transform:scaleX(0.9396);">Help</span>
<span class="t" style="left:8.00px;top:60.04px;font-size:8.8px;transform:scaleX(0.8869);font-weight:bold;">Opened Files</span>
<span class="t" style="left:21.50px;top:72.54px;font-size:8.8px;transform:scaleX(0.9268);">D:\Work\BLADE</span>
<span class="t" style="left:35.00px;top:85.04px;font-size:8.8px;transform:scaleX(0.9041);font-weight:bold;">Debugging Example 3.lsp</span>
<span class="t" style="left:35.00px;top:97.54px;font-size:8.8px;transform:scaleX(0.9333);">Hello.lsp</span>
<span class="t" style="left:35.00px;top:110.04px;font-size:8.8px;transform:scaleX(0.9481);">Hello.dcl</span>
<span class="t" style="left:35.00px;top:122.54px;font-size:8.8px;transform:scaleX(0.9213);">Division.lsp</span>
<span class="t" style="left:35.00px;top:135.04px;font-size:8.8px;transform:scaleX(0.9438);">Division.dcl</span>
<span class="t" style="left:21.50px;top:147.54px;font-size:8.8px;transform:scaleX(0.9626);">D:\Work\AcadPath</span>
<span class="t" style="left:35.00px;top:160.04px;font-size:8.8px;transform:scaleX(0.8631);">DDEdReg.lsp</span>
<span class="t" style="left:35.00px;top:172.54px;font-size:8.8px;transform:scaleX(0.9006);">DDEdText.dcl</span>
<span class="t" style="left:35.00px;top:185.04px;font-size:8.8px;transform:scaleX(0.8739);">DDChReg.lsp</span>
<span class="t" style="left:35.00px;top:197.54px;font-size:8.8px;transform:scaleX(0.9204);">DDChText.dcl</span>
<span class="t" style="left:21.50px;top:210.04px;font-size:8.8px;transform:scaleX(0.9426);">D:\Work\W_Stn\C\Data\Program Files\WC_Acad2007\L</span>
<span class="t" style="left:35.00px;top:222.54px;font-size:8.8px;transform:scaleX(0.8969);">WC_Acad.lsp</span>
<span class="t" style="left:35.00px;top:235.04px;font-size:8.8px;transform:scaleX(0.9236);">Begfun.lsp</span>
<span class="t" style="left:35.00px;top:247.54px;font-size:8.8px;transform:scaleX(0.9113);">Helix.lsp</span>
<span class="t" style="left:8.00px;top:260.04px;font-size:8.8px;transform:scaleX(0.9355);font-weight:bold;">[Current Project]</span>
<span class="t" style="left:12.50px;top:566.05px;font-size:8.48px;transform:scaleX(0.9061);font-weight:bold;">Files</span>
<span class="t" style="left:40.50px;top:566.06px;font-size:8.16px;transform:scaleX(0.9046);">Functions</span>
<span class="t" style="left:89.00px;top:566.06px;font-size:8.16px;transform:scaleX(0.8974);">Resources</span>
<span class="t" style="left:141.00px;top:566.06px;font-size:8.16px;transform:scaleX(0.9287);">Profiler</span>
<span class="t" style="left:4.00px;top:583.85px;font-size:8.37px;transform:scaleX(0.8221);">Line</span>
<span class="t" style="left:28.00px;top:583.85px;font-size:8.37px;transform:scaleX(0.9143);">27 of</span>
<span class="t" style="left:55.00px;top:583.85px;font-size:8.37px;transform:scaleX(0.9057);">41, Col</span>
<span class="t" style="left:87.00px;top:583.85px;font-size:8.37px;transform:scaleX(0.9179);">8, Chars</span>
<span class="t" style="left:124.00px;top:583.85px;font-size:8.37px;transform:scaleX(0.9317);">686</span>
<span class="t" style="left:141.00px;top:583.85px;font-size:8.37px;transform:scaleX(0.9143);">[INS]</span>
<span class="t" style="left:237.00px;top:61.66px;font-size:8.16px;transform:scaleX(0.9144);">Debugging Example 3.lsp</span>
<span class="t" style="left:343.75px;top:61.66px;font-size:8.16px;transform:scaleX(0.8711);">Hello.lsp</span>
<span class="t" style="left:393.75px;top:61.66px;font-size:8.16px;transform:scaleX(0.8871);">Hello.dcl</span>
<span class="t" style="left:443.75px;top:61.66px;font-size:8.16px;transform:scaleX(0.9030);">Division.lsp</span>
<span class="t" style="left:503.00px;top:61.66px;font-size:8.16px;transform:scaleX(0.8970);">Division.dcl</span>
<span class="t" style="left:562.50px;top:61.66px;font-size:8.16px;transform:scaleX(0.8802);">DDEdReg.lsp</span>
<span class="t" style="left:628.00px;top:61.66px;font-size:8.16px;transform:scaleX(0.9308);">DDEdText.dcl</span>
<span class="t" style="left:695.80px;top:61.66px;font-size:8.16px;transform:scaleX(0.8862);">DDChReg.lsp</span>
<span class="t" style="left:762.00px;top:61.66px;font-size:8.16px;transform:scaleX(0.9226);">DDChText.dcl</span>
<span class="t" style="left:830.00px;top:61.66px;font-size:8.16px;transform:scaleX(0.9166);">WC_Acad.lsp</span>
<span class="t" style="left:897.00px;top:61.66px;font-size:8.16px;transform:scaleX(0.9339);">Begfun.lsp</span>
<span class="t" style="left:954.80px;top:61.66px;font-size:8.16px;transform:scaleX(0.9342);">Helix.lsp</span>
<span class="t" style="left:237.00px;top:454.04px;font-size:8.8px;transform:scaleX(0.9043);">Variable</span>
<span class="t" style="left:377.00px;top:454.04px;font-size:8.8px;transform:scaleX(0.8692);">Value</span>
<span class="t" style="left:543.00px;top:454.04px;font-size:8.8px;transform:scaleX(0.8911);">Type</span>
<span class="t" style="left:598.60px;top:454.04px;font-size:8.8px;transform:scaleX(0.8658);overflow:hidden;">Break</span>
<span class="t" style="left:248.00px;top:469.54px;font-size:8.8px;transform:scaleX(0.9438);">*last-value*</span>
<span class="t" style="left:377.00px;top:469.54px;font-size:8.8px;transform:scaleX(0.8448);">BROKEN_CODE</span>
<span class="t" style="left:543.00px;top:469.54px;font-size:8.8px;transform:scaleX(0.9701);">&lt;symbol&gt;</span>
<span class="t" style="left:248.00px;top:482.74px;font-size:8.8px;transform:scaleX(0.9435);color:#e01a1e;">broken_code</span>
<span class="t" style="left:377.00px;top:482.74px;font-size:8.8px;transform:scaleX(0.9237);color:#e01a1e;">#&lt;&lt;FUNCTION&gt; #x36 @fffc51926&gt;</span>
<span class="t" style="left:543.00px;top:482.74px;font-size:8.8px;transform:scaleX(0.9492);color:#e01a1e;">&lt;subr&gt;</span>
<span class="t" style="left:248.00px;top:495.94px;font-size:8.8px;transform:scaleX(0.9603);">loc1</span>
<span class="t" style="left:377.00px;top:495.94px;font-size:8.8px;transform:scaleX(1.0213);">nil</span>
<span class="t" style="left:543.00px;top:495.94px;font-size:8.8px;transform:scaleX(0.9959);">&lt;nil&gt;</span>
<span class="t" style="left:248.00px;top:509.14px;font-size:8.8px;transform:scaleX(0.9913);">loc2</span>
<span class="t" style="left:377.00px;top:509.14px;font-size:8.8px;transform:scaleX(1.0213);">nil</span>
<span class="t" style="left:543.00px;top:509.14px;font-size:8.8px;transform:scaleX(0.9959);">&lt;nil&gt;</span>
<span class="t" style="left:248.00px;top:522.34px;font-size:8.8px;transform:scaleX(0.9913);">loc3</span>
<span class="t" style="left:377.00px;top:522.34px;font-size:8.8px;transform:scaleX(1.0213);">nil</span>
<span class="t" style="left:543.00px;top:522.34px;font-size:8.8px;transform:scaleX(0.9959);">&lt;nil&gt;</span>
<span class="t" style="left:248.00px;top:535.54px;font-size:8.8px;transform:scaleX(0.8873);color:#e01a1e;">set_variables</span>
<span class="t" style="left:377.00px;top:535.54px;font-size:8.8px;transform:scaleX(0.9237);color:#e01a1e;">#&lt;&lt;FUNCTION&gt; #x36 @fffc51916&gt;</span>
<span class="t" style="left:543.00px;top:535.54px;font-size:8.8px;transform:scaleX(0.9492);color:#e01a1e;">&lt;subr&gt;</span>
<span class="t" style="left:240.00px;top:566.05px;font-size:8.48px;transform:scaleX(0.9313);font-weight:bold;">Locals</span>
<span class="t" style="left:275.50px;top:566.06px;font-size:8.16px;transform:scaleX(0.9553);">Watch 1</span>
<span class="t" style="left:318.70px;top:566.06px;font-size:8.16px;transform:scaleX(0.9553);">Watch 2</span>
<span class="t" style="left:362.00px;top:566.06px;font-size:8.16px;transform:scaleX(0.9789);">Watch 3</span>
<span class="t" style="left:405.50px;top:566.06px;font-size:8.16px;transform:scaleX(0.9064);">Sysvars</span>
<span class="t" style="left:448.00px;top:566.06px;font-size:8.16px;transform:scaleX(0.9107);">Find References</span>
<span class="t" style="left:521.80px;top:566.06px;font-size:8.16px;transform:scaleX(0.9469);">Output</span>
<span class="t" style="left:560.00px;top:566.06px;font-size:8.16px;transform:scaleX(0.8599);">LispConsole</span>
<span class="t" style="left:672.50px;top:454.04px;font-size:8.8px;transform:scaleX(0.9370);">Row</span>
<span class="t" style="left:725.75px;top:454.04px;font-size:8.8px;transform:scaleX(0.9556);">Function</span>
<span class="t" style="left:795.50px;top:454.04px;font-size:8.8px;transform:scaleX(0.8811);">File</span>
<span class="t" style="left:891.00px;top:454.04px;font-size:8.8px;transform:scaleX(0.9056);">Path</span>
<span class="t" style="left:681.75px;top:468.74px;font-size:8.8px;transform:scaleX(0.9442);font-weight:bold;">27</span>
<span class="t" style="left:718.00px;top:468.74px;font-size:8.8px;transform:scaleX(0.8465);font-weight:bold;">C:EXAMPLE3</span>
<span class="t" style="left:795.50px;top:468.74px;font-size:8.8px;transform:scaleX(0.9063);font-weight:bold;">Debugging Example ...</span>
<span class="t" style="left:891.00px;top:468.74px;font-size:8.8px;transform:scaleX(0.9556);font-weight:bold;width:148.39px;overflow:hidden;">D:\Work\BLADE\Debugging Example</span>
<span class="t" style="left:725.75px;top:482.14px;font-size:8.8px;transform:scaleX(0.9699);">&lt;global&gt;</span>
<span class="t" style="left:643.75px;top:566.06px;font-size:8.16px;transform:scaleX(0.9285);">Breakpoints</span>
<span class="t" style="left:703.00px;top:566.05px;font-size:8.48px;transform:scaleX(0.9572);font-weight:bold;">Call Stack</span>
<span class="t" style="left:752.50px;top:566.06px;font-size:8.16px;transform:scaleX(0.8844);">Debug Files</span>
<span class="t" style="left:808.75px;top:566.06px;font-size:8.16px;transform:scaleX(0.9121);">Debug Functions</span>
<span class="t" style="left:653.00px;top:395.73px;font-size:9.12px;transform:scaleX(0.8941);color:#8a8a8a;">Debug</span>
<span class="t" style="left:661.00px;top:416.16px;font-size:8.16px;transform:scaleX(0.9188);">AutoBreak</span>
<span class="t" style="left:661.00px;top:435.66px;font-size:8.16px;transform:scaleX(0.8918);">Use Profiler</span>
<span class="t" style="left:789.00px;top:435.66px;font-size:8.16px;transform:scaleX(0.9456);font-weight:bold;">BROKEN_CODE</span>
<div style="left:5px;top:4px;width:1026.50px;height:1.75px;background:#74b1ea"></div>
<div style="left:1.8px;top:7px;width:1.15px;height:586.00px;background:#74b1ea"></div>
<div style="left:1033.1px;top:7.2px;width:1.80px;height:585.80px;background:#74b1ea"></div>
<div style="left:5px;top:595px;width:1026.00px;height:1.80px;background:#74b1ea"></div>
<div style="left:2.4px;top:5.2px;width:2.20px;height:1.40px;background:#cfe3f6"></div>
<div style="left:1031.8px;top:5.2px;width:1.80px;height:1.60px;background:#cfe3f6"></div>
</div></body></html>
